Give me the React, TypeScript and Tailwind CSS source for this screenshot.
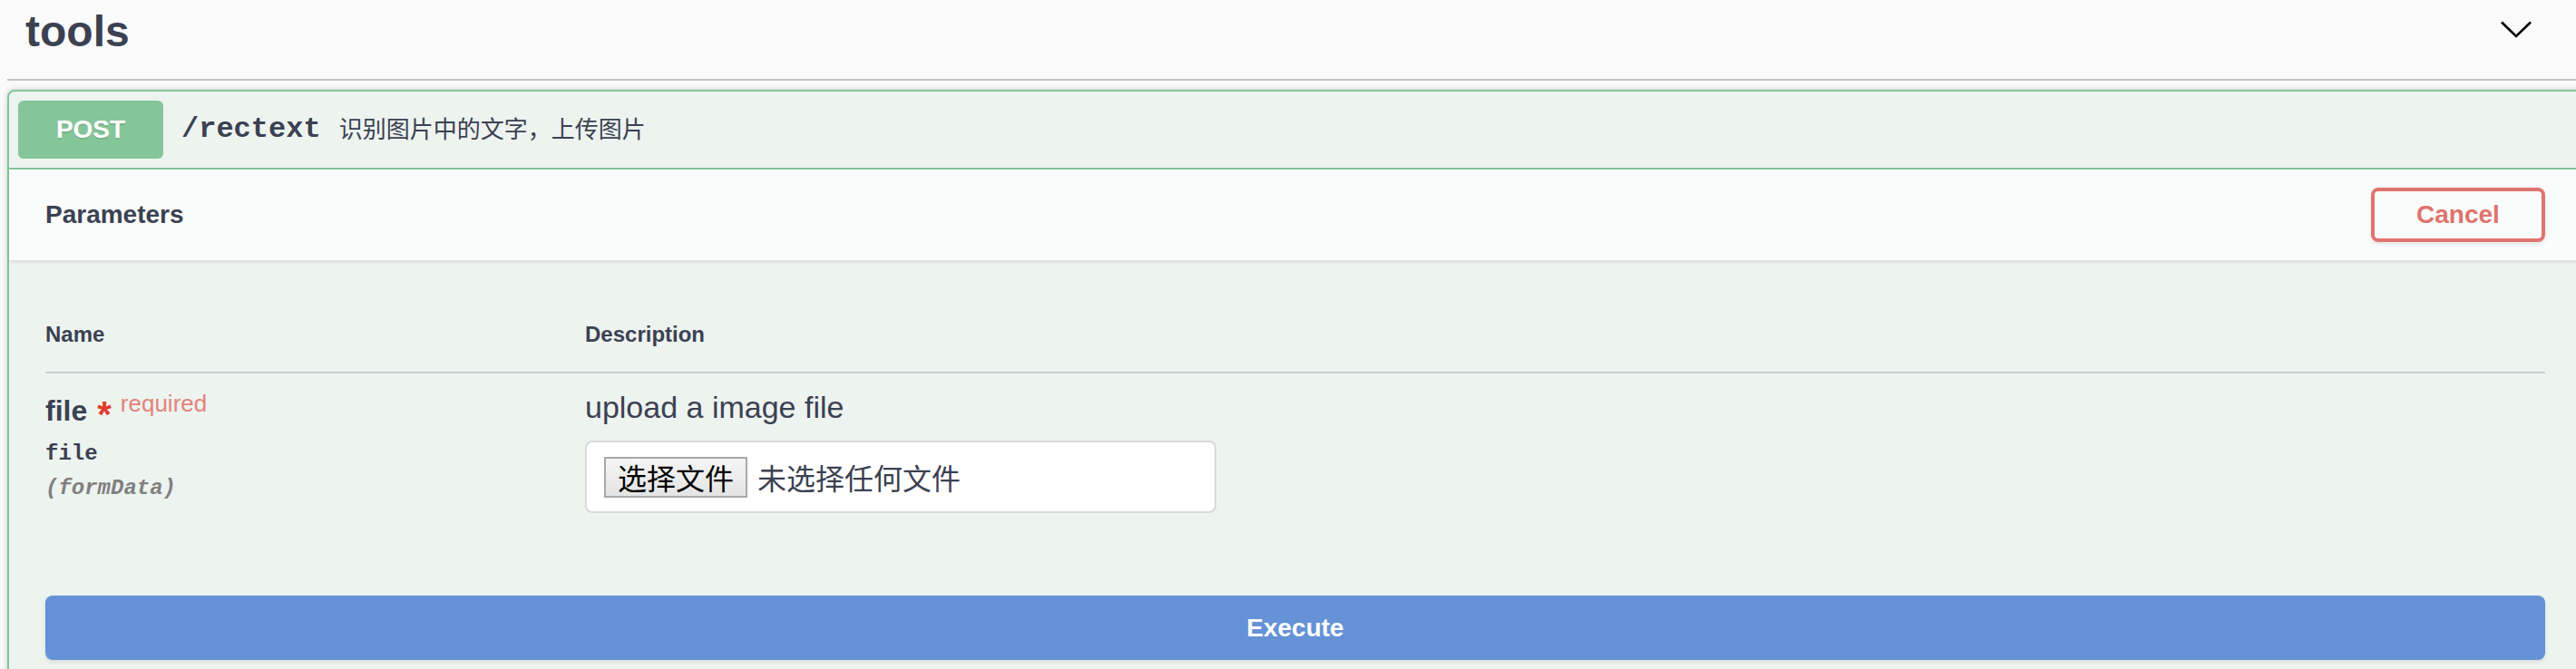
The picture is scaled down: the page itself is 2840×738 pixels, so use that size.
const sans = "font-['Liberation_Sans','Noto_Sans_CJK_SC',sans-serif]";
const mono = "font-['Liberation_Mono',monospace]";

function TagHeader() {
  return (
    <div className="flex h-[89px] items-start justify-between border-b-2 border-[#c1c3c7] pl-[20px] pr-[57px]">
      <h4 className="mt-[11px] text-[48px] leading-[48px] font-bold">tools</h4>
      <svg className="mt-[23px]" width="34" height="19" viewBox="0 0 34 19" fill="none">
        <polyline points="1,1.5 17,17 33,1.5" stroke="#000" strokeWidth="2.6" />
      </svg>
    </div>
  );
}

function Summary() {
  return (
    <div className="flex items-center border-b-2 border-[#84c69c] p-[10px]">
      <span className="flex h-[64px] w-[160px] items-center justify-center rounded-[6px] bg-[#85c59a] text-[28px] font-bold text-white [text-shadow:0_2px_0_rgba(0,0,0,0.1)]">
        POST
      </span>
      <span className={`${mono} px-[20px] text-[32px] font-bold`}>/rectext</span>
      <span className="text-[26px] leading-[34px] text-[#3b4151]">识别图片中的文字，上传图片</span>
    </div>
  );
}

function FileInput() {
  return (
    <div className="mt-[20px] flex h-[80px] w-[696px] items-center rounded-[8px] border-2 border-[#d9d9d9] bg-white px-[19px] font-['Noto_Sans_CJK_SC',sans-serif]">
      <span className="flex h-[45px] items-center border-2 border-[#a8a8a8] bg-gradient-to-b from-[#f5f5f5] to-[#e4e4e4] px-[13px] text-[32px] leading-[36px] text-black">
        选择文件
      </span>
      <span className="ml-[11px] text-[32px] leading-[36px] text-[#3b4151]">未选择任何文件</span>
    </div>
  );
}

function ParamsBody() {
  return (
    <div className="px-[40px] pt-[70px] pb-[40px]">
      <div className="grid grid-cols-[595px_1fr] border-b-2 border-[#cbd0d0] pb-[29px] text-[24px] leading-[24px] font-bold">
        <div>Name</div>
        <div>Description</div>
      </div>
      <div className="grid grid-cols-[595px_1fr]">
        <div className="pt-[25px]">
          <div className="flex items-start text-[32px] leading-[32px] font-bold">
            <span>file</span>
            <span className="relative top-[4px] ml-[11px] text-[40px] leading-[32px] text-[#e23b2a]">*</span>
            <span className="relative top-[-5px] pl-[10px] text-[26px] leading-[26px] font-normal text-[#e2837a]">required</span>
          </div>
          <div className={`${mono} mt-[20px] text-[24px] leading-[24px] font-bold`}>file</div>
          <div className={`${mono} mt-[14px] text-[24px] leading-[24px] font-bold italic text-[#808080]`}>(formData)</div>
        </div>
        <div className="pt-[20px]">
          <p className="text-[34px] leading-[34px]">upload a image file</p>
          <FileInput />
        </div>
      </div>
      <button
        type="button"
        className="mt-[91px] flex h-[71px] w-full items-center justify-center rounded-[8px] bg-[#6592d6] text-[28px] font-bold text-white shadow-[0_2px_4px_rgba(0,0,0,0.1)]"
      >
        Execute
      </button>
    </div>
  );
}

export default function App() {
  return (
    <div className={`h-[738px] w-[2840px] overflow-hidden bg-[#fafafa] text-[#3b4151] ${sans}`}>
      <div className="ml-[8px] w-[2840px]">
        <TagHeader />
        <div className="mt-[10px] rounded-[8px] border-2 border-[#84c69c] bg-[#edf3ef] shadow-[0_0_6px_rgba(0,0,0,0.19)]">
          <Summary />
          <div className="relative flex h-[100px] items-center justify-between bg-[#fafcfb] px-[40px] shadow-[0_2px_4px_rgba(0,0,0,0.1)]">
            <h4 className="text-[28px] leading-[28px] font-bold">Parameters</h4>
            <button
              type="button"
              className="flex h-[60px] w-[192px] items-center justify-center rounded-[8px] border-4 border-[#e0736e] text-[28px] font-bold text-[#e0736e] shadow-[0_2px_4px_rgba(0,0,0,0.1)]"
            >
              Cancel
            </button>
          </div>
          <ParamsBody />
        </div>
      </div>
    </div>
  );
}
